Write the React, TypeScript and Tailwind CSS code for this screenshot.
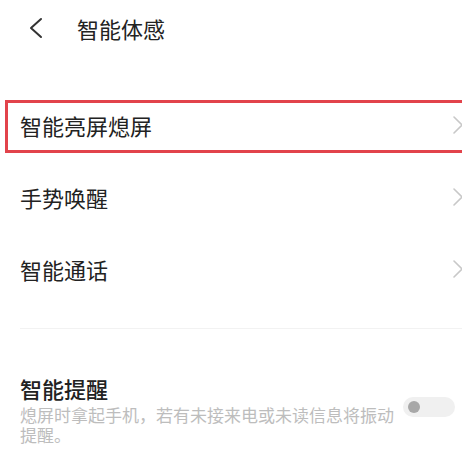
import React from "react";

function ChevronRight() {
  return (
    <svg width="12" height="20" viewBox="0 0 12 20" fill="none">
      <polyline points="2,2 10,10 2,18" stroke="#c8c8c8" strokeWidth="1.6" strokeLinecap="round" strokeLinejoin="round" />
    </svg>
  );
}

function Row({ label, highlighted }: { label: string; highlighted?: boolean }) {
  return (
    <div
      className={
        "flex items-center h-[53px] w-[462px] ml-[5px] pl-[12px] pb-[4px] border-l-[3px] border-t-[3px] border-b-[3px] " +
        (highlighted ? "border-[#e2434b]" : "border-transparent")
      }
    >
      <span className="flex-1 text-[22px] leading-[26px] text-[#222]">{label}</span>
      <span className="w-[17px] flex items-center pl-[2px]">
        <ChevronRight />
      </span>
    </div>
  );
}

export default function App() {
  return (
    <div
      className="w-[462px] h-[452px] bg-white overflow-hidden"
      style={{ fontFamily: '"Noto Sans CJK SC", "Noto Sans", sans-serif' }}
    >
      <div className="flex items-center h-[56px] pl-[27px]">
        <svg width="18" height="22" viewBox="0 0 18 22" fill="none">
          <polyline points="14,2 4,11 14,20" stroke="#333" strokeWidth="2" strokeLinecap="round" strokeLinejoin="round" />
        </svg>
        <span className="ml-[32px] text-[22px] leading-[26px] text-[#222]">智能体感</span>
      </div>

      <div className="mt-[44px] flex flex-col gap-[19px] overflow-hidden">
        <Row label="智能亮屏熄屏" highlighted />
        <Row label="手势唤醒" />
        <Row label="智能通话" />
      </div>

      <div className="mt-[31px] ml-[20px] h-px bg-[#f2f2f2]" />

      <div className="mt-[46px] ml-[20px] flex items-start">
        <div className="w-[380px]">
          <div className="text-[22px] leading-[26px] text-[#222] font-medium">智能提醒</div>
          <div className="mt-[4px] text-[17px] leading-[20px] text-[#bdbdbd]">
            熄屏时拿起手机，若有未接来电或未读信息将振动提醒。
          </div>
        </div>
        <div className="ml-[3px] mt-[22px] w-[52px] h-[20px] rounded-full bg-[#f0f0f0] flex items-center pl-[5px]">
          <div className="w-[12px] h-[12px] rounded-full bg-[#a8a8a8]" />
        </div>
      </div>
    </div>
  );
}
